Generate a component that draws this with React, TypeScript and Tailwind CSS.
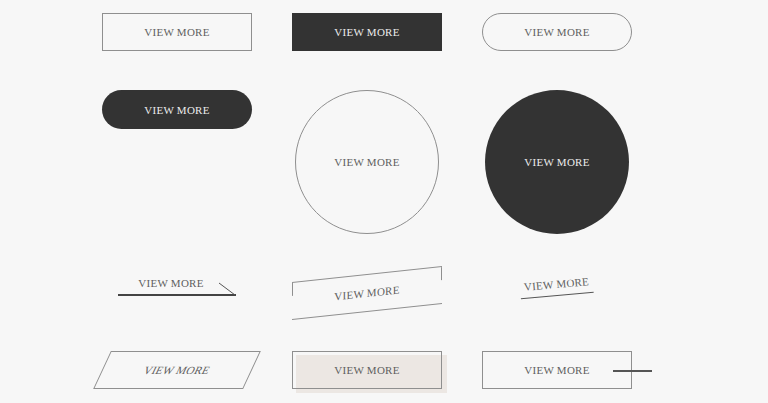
const label =
  "font-['Liberation_Serif',serif] text-[11px] leading-[14px] tracking-[0.25px] uppercase";

function Outline({ className = "" }: { className?: string }) {
  return (
    <div
      className={`flex h-[38px] w-[150px] items-center justify-center border border-[#8f8f8f] text-[#5f5f5f] ${label} ${className}`}
    >
      View More
    </div>
  );
}

export default function App() {
  return (
    <div className="min-h-screen bg-[#f7f7f7] pl-[102px] pt-[13px]">
      <div className="grid grid-cols-[150px_150px_150px] gap-x-10">
        {/* row 1 */}
        <Outline />
        <div
          className={`flex h-[38px] items-center justify-center bg-[#333333] text-[#ececec] ${label}`}
        >
          View More
        </div>
        <Outline className="rounded-full" />

        {/* row 2 */}
        <div className="mt-[39px]">
          <div
            className={`flex h-[39px] items-center justify-center rounded-full bg-[#333333] text-[#ececec] ${label}`}
          >
            View More
          </div>
        </div>
        <div className="mt-[39px] flex justify-center">
          <div
            className={`flex h-[144px] w-[144px] items-center justify-center rounded-full border border-[#8f8f8f] text-[#5f5f5f] ${label}`}
          >
            View More
          </div>
        </div>
        <div className="mt-[39px] flex justify-center">
          <div
            className={`flex h-[144px] w-[144px] items-center justify-center rounded-full bg-[#333333] text-[#ececec] ${label}`}
          >
            View More
          </div>
        </div>

        {/* row 3 */}
        <div className="mt-[40px] flex h-[38px] items-start justify-center">
          <div className="relative w-[118px] border-b-2 border-[#444] pt-[2px] pb-[4px]">
            <div className={`pr-[12px] text-center text-[#5f5f5f] ${label}`}>
              View More
            </div>
            <svg
              className="absolute right-0 bottom-[-2px]"
              width="18"
              height="14"
              viewBox="0 0 18 14"
            >
              <line x1="1" y1="1" x2="17" y2="13" stroke="#555" strokeWidth="1" />
            </svg>
          </div>
        </div>
        <div className="mt-[40px] h-[38px]">
          <div
            className={`relative flex h-[38px] -skew-y-6 items-center justify-center border-y border-[#8f8f8f] text-[#5f5f5f] ${label}`}
          >
            <span className="absolute top-0 left-0 h-[13px] w-px bg-[#8f8f8f]" />
            <span className="absolute top-0 right-0 h-[13px] w-px bg-[#8f8f8f]" />
            View More
          </div>
        </div>
        <div className="mt-[43px] flex h-[35px] items-start justify-center">
          <div
            className={`-rotate-[5deg] border-b border-[#555] px-[4px] pb-[4px] text-[#5f5f5f] ${label}`}
          >
            View More
          </div>
        </div>

        {/* row 4 */}
        <div className="mt-[39px] flex justify-center">
          <div
            className={`flex h-[38px] w-[150px] -skew-x-[25deg] items-center justify-center border border-[#8f8f8f] text-[#5f5f5f] ${label}`}
          >
            View More
          </div>
        </div>
        <div className="relative mt-[39px] h-[38px]">
          <span className="absolute top-[4px] right-[-5px] bottom-[-4px] left-[4px] bg-[#ece7e3]" />
          <div
            className={`relative flex h-full items-center justify-center border border-[#8f8f8f] text-[#5f5f5f] ${label}`}
          >
            View More
          </div>
        </div>
        <div className="relative mt-[39px]">
          <Outline />
          <span className="absolute top-[19px] left-[131px] h-[1.5px] w-[39px] bg-[#555]" />
        </div>
      </div>
    </div>
  );
}
